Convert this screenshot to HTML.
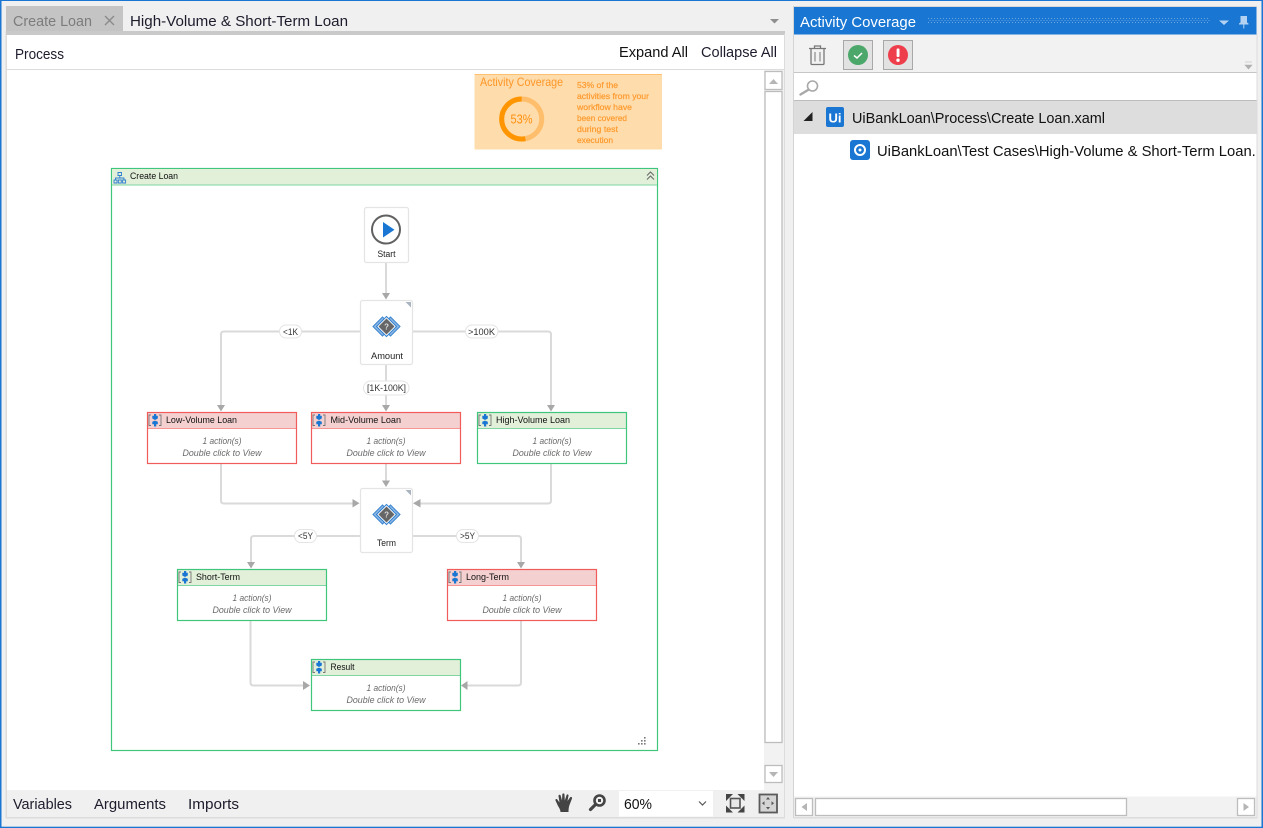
<!DOCTYPE html>
<html><head><meta charset="utf-8"><title>Activity Coverage</title>
<style>
html,body{margin:0;padding:0;background:#f0f0f0;overflow:hidden}
svg{display:block;font-family:"Liberation Sans",sans-serif}
.t{font-size:15px;fill:#1c1c2c}
.n{font-size:9px;fill:#111}
.i{font-size:9px;fill:#6a6a6a;font-style:italic;text-anchor:middle}
.w{fill:none;stroke:#dadada;stroke-width:2}
.a{fill:#a8a8a8}
.d{font-size:8.5px;fill:#ff9a2e;stroke:#ff9a2e;stroke-width:.2}
.l{font-size:9px;fill:#333;text-anchor:middle}
</style></head><body>
<svg width="1263" height="828" viewBox="0 0 1263 828" xmlns="http://www.w3.org/2000/svg">
<defs>
<clipPath id="rc"><rect x="794" y="134" width="462" height="40"/></clipPath>
<g id="seq">
<path d="M4 3H2V13.500H4M12 3H14V13.500H12" fill="none" stroke="#777" stroke-width=".9"/>
<path d="M5.300 3.700H7V2H9.200V3.700H10.800V6.500L8 8L5.300 6.500Z" fill="#1976d2"/>
<path d="M5.300 12.300H7V14.500H9.200V12.300H10.800V9.800L8 8.600L5.300 9.800Z" fill="#1976d2"/>
</g>
<g id="dec">
<path d="M-9.500 0L0 -9.500L9.500 0L0 9.500Z" fill="#8cb8e4" stroke="#3a85d0" stroke-width="1" transform="translate(-4 0)"/>
<path d="M-9.500 0L0 -9.500L9.500 0L0 9.500Z" fill="#8cb8e4" stroke="#3a85d0" stroke-width="1" transform="translate(4 0)"/>
<path d="M-10 0L0 -10L10 0L0 10Z" fill="#fff" stroke="#2f7fd0" stroke-width="1"/>
<path d="M-8 0L0 -8L8 0L0 8Z" fill="#666"/>
<text x="0" y="3" font-size="8" font-weight="bold" fill="#ddd" text-anchor="middle">?</text>
</g>
</defs>

<!-- window -->
<rect width="1263" height="828" fill="#f0f0f0"/>
<rect x="0" y="0" width="1263" height="1" fill="#1a76d2"/>
<rect x="0" y="0" width="1.500" height="828" fill="#1a76d2"/>
<rect x="1261.500" y="0" width="1.500" height="828" fill="#1a76d2"/>
<rect x="0" y="826.700" width="1263" height="1.300" fill="#1a76d2"/>

<!-- left doc -->
<rect x="5.500" y="31" width="1.500" height="787" fill="#dcdcdc"/>
<rect x="6" y="6" width="117" height="25" fill="#c4c4c4"/>
<rect x="6" y="31" width="779" height="4" fill="#c9c9c9"/>
<rect x="7" y="35" width="778" height="755" fill="#fff"/>
<text x="13" y="26" class="t" style="fill:#7c7c7c" textLength="79" lengthAdjust="spacingAndGlyphs">Create Loan</text>
<path d="M105 16L114 25M114 16L105 25" stroke="#8a8a8a" stroke-width="1.400" fill="none"/>
<text x="130" y="26" class="t" textLength="218" lengthAdjust="spacingAndGlyphs">High-Volume &amp; Short-Term Loan</text>
<path d="M770 19H779L774.500 23.500Z" fill="#8e8e8e"/>
<text x="15" y="59" class="t" textLength="49" lengthAdjust="spacingAndGlyphs">Process</text>
<text x="619" y="57" class="t" style="fill:#111" textLength="69" lengthAdjust="spacingAndGlyphs">Expand All</text>
<text x="701" y="57" class="t" textLength="76" lengthAdjust="spacingAndGlyphs">Collapse All</text>
<rect x="7" y="69" width="778" height="1" fill="#dcdcdc"/>

<!-- scrollbar -->
<rect x="764" y="70" width="20" height="720" fill="#f2f2f2"/>
<rect x="765" y="71.500" width="17" height="18" fill="#fff" stroke="#bdbdbd" stroke-width="1.300"/>
<path d="M769 84L773.500 79L778 84Z" fill="#b5b5b5"/>
<rect x="765" y="91.500" width="17" height="651" fill="#fff" stroke="#bdbdbd" stroke-width="1.300"/>
<rect x="765" y="765.500" width="17" height="17" fill="#fff" stroke="#bdbdbd" stroke-width="1.300"/>
<path d="M769 772H778L773.500 777Z" fill="#b5b5b5"/>

<!-- coverage box -->
<rect x="474.500" y="74.500" width="187.500" height="75" fill="#fedcab"/>
<rect x="474.500" y="74" width="187.500" height="1" fill="#ffc070"/>
<text x="480" y="86" font-size="12" fill="#ff9626" textLength="83" lengthAdjust="spacingAndGlyphs">Activity Coverage</text>
<circle cx="521.700" cy="119" r="20" fill="none" stroke="#ffbe6c" stroke-width="5"/>
<path d="M521.700 99A20 20 0 1 0 525.400 138.650" fill="none" stroke="#ff9500" stroke-width="5"/>
<text x="521.500" y="123.500" font-size="13" fill="#ff9010" text-anchor="middle" textLength="22" lengthAdjust="spacingAndGlyphs">53%</text>
<text x="577" y="88" class="d" textLength="41" lengthAdjust="spacingAndGlyphs">53% of the</text>
<text x="577" y="99" class="d" textLength="72" lengthAdjust="spacingAndGlyphs">activities from your</text>
<text x="577" y="110" class="d" textLength="55" lengthAdjust="spacingAndGlyphs">workflow have</text>
<text x="577" y="121" class="d" textLength="50" lengthAdjust="spacingAndGlyphs">been covered</text>
<text x="577" y="132" class="d" textLength="41" lengthAdjust="spacingAndGlyphs">during test</text>
<text x="577" y="143" class="d" textLength="36" lengthAdjust="spacingAndGlyphs">execution</text>

<!-- container -->
<rect x="111.500" y="168.500" width="546" height="582" fill="#fff" stroke="#3fc57c" stroke-width="1.200"/>
<rect x="112" y="169" width="545" height="15.500" fill="#e2efd9"/>
<rect x="112" y="184.500" width="545" height="1" fill="#7fd6a2"/>
<path d="M118 172.500h3.500v3H118zM114 180h3v3h-3zM118.300 180h3v3h-3zM122.600 180h3v3h-3zM119.800 175.500v2.500M115.500 180v-2h8.500v2" fill="none" stroke="#2f7fd0" stroke-width=".9"/>
<text x="130" y="179" class="n" textLength="48" lengthAdjust="spacingAndGlyphs">Create Loan</text>
<path d="M647 175.500L650.500 172L654 175.500M647 179.500L650.500 176L654 179.500" fill="none" stroke="#666" stroke-width="1"/>
<g fill="#777"><rect x="644" y="737" width="1.600" height="1.600"/><rect x="641" y="740" width="1.600" height="1.600"/><rect x="644" y="740" width="1.600" height="1.600"/><rect x="638" y="743" width="1.600" height="1.600"/><rect x="641" y="743" width="1.600" height="1.600"/><rect x="644" y="743" width="1.600" height="1.600"/></g>

<!-- wires -->
<path class="w" d="M386 262V294"/>
<path class="w" d="M360 331.500H224Q221 331.500 221 334.500V406"/>
<path class="w" d="M413 331.500H548Q551 331.500 551 334.500V406"/>
<path class="w" d="M386 364V406"/>
<path class="w" d="M221 464V500.500Q221 503.500 224 503.500H354"/>
<path class="w" d="M386 464V482"/>
<path class="w" d="M551 464V500.500Q551 503.500 548 503.500H420"/>
<path class="w" d="M360 536H254Q251 536 251 539V563"/>
<path class="w" d="M413 536H518Q521 536 521 539V563"/>
<path class="w" d="M250.500 621V682.500Q250.500 685.500 253.500 685.500H303"/>
<path class="w" d="M521 621V682.500Q521 685.500 518 685.500H467"/>
<!-- arrows -->
<path class="a" d="M382 293H390L386 299.500Z"/>
<path class="a" d="M217 405H225L221 411.500Z"/>
<path class="a" d="M382 405H390L386 411.500Z"/>
<path class="a" d="M547 405H555L551 411.500Z"/>
<path class="a" d="M382 480.500H390L386 487Z"/>
<path class="a" d="M352.500 499V507.500L359.500 503.300Z"/>
<path class="a" d="M420.500 499V507.500L413 503.300Z"/>
<path class="a" d="M247 562H255L251 568.500Z"/>
<path class="a" d="M517 562H525L521 568.500Z"/>
<path class="a" d="M303 681V690L310 685.500Z"/>
<path class="a" d="M467.500 681V690L461 685.500Z"/>

<!-- start -->
<rect x="364.500" y="207.500" width="44" height="55" rx="2" fill="#fff" stroke="#e4e4e4" stroke-width="1.200"/>
<circle cx="386" cy="229.500" r="14" fill="#fff" stroke="#606060" stroke-width="2"/>
<path d="M383 222V237.500L394.500 229.700Z" fill="#1976d2"/>
<text x="386.500" y="257" class="l" style="fill:#222" textLength="18" lengthAdjust="spacingAndGlyphs">Start</text>

<!-- amount -->
<rect x="360.500" y="300.500" width="52" height="64" rx="2" fill="#fff" stroke="#e4e4e4" stroke-width="1.200"/>
<path d="M405.500 302H411V307.500Z" fill="#a9b4c0"/>
<use href="#dec" x="386.500" y="326.500"/>
<text x="387" y="359" class="l" style="fill:#222" textLength="32" lengthAdjust="spacingAndGlyphs">Amount</text>

<!-- term -->
<rect x="360.500" y="488.500" width="52" height="64" rx="2" fill="#fff" stroke="#e4e4e4" stroke-width="1.200"/>
<path d="M405.500 490H411V495.500Z" fill="#a9b4c0"/>
<use href="#dec" x="386.500" y="514.500"/>
<text x="386.500" y="546" class="l" style="fill:#222" textLength="19" lengthAdjust="spacingAndGlyphs">Term</text>

<!-- pills -->
<g fill="#fff" stroke="#e4e4e4">
<rect x="279.500" y="325" width="22" height="13" rx="6.500"/>
<rect x="465.500" y="325" width="32.500" height="13" rx="6.500"/>
<rect x="363.500" y="381" width="45.500" height="14" rx="7"/>
<rect x="294.500" y="529.500" width="22" height="13" rx="6.500"/>
<rect x="456.500" y="529.500" width="22" height="13" rx="6.500"/>
</g>
<text x="290.500" y="335" class="l" textLength="15" lengthAdjust="spacingAndGlyphs">&lt;1K</text>
<text x="481.500" y="335" class="l" textLength="27" lengthAdjust="spacingAndGlyphs">&gt;100K</text>
<text x="386.500" y="391" class="l" textLength="39" lengthAdjust="spacingAndGlyphs">[1K-100K]</text>
<text x="305.500" y="539" class="l" textLength="15" lengthAdjust="spacingAndGlyphs">&lt;5Y</text>
<text x="467.500" y="539" class="l" textLength="15" lengthAdjust="spacingAndGlyphs">&gt;5Y</text>

<!-- Low -->
<g transform="translate(147 412)">
<rect x=".5" y=".5" width="149" height="51" fill="#fff"/><rect x="1" y="1" width="148" height="15" fill="#f4d0d0"/><rect x="1" y="16" width="148" height="1" fill="#f79494"/><rect x=".5" y=".5" width="149" height="51" fill="none" stroke="#f05c5c" stroke-width="1.200"/>
<use href="#seq" x="0" y="0"/>
<text x="19" y="11" class="n" textLength="71" lengthAdjust="spacingAndGlyphs">Low-Volume Loan</text>
<text x="75" y="32" class="i" textLength="39" lengthAdjust="spacingAndGlyphs">1 action(s)</text>
<text x="75" y="44" class="i" textLength="79" lengthAdjust="spacingAndGlyphs">Double click to View</text>
</g>
<!-- Mid -->
<g transform="translate(311 412)">
<rect x=".5" y=".5" width="149" height="51" fill="#fff"/><rect x="1" y="1" width="148" height="15" fill="#f4d0d0"/><rect x="1" y="16" width="148" height="1" fill="#f79494"/><rect x=".5" y=".5" width="149" height="51" fill="none" stroke="#f05c5c" stroke-width="1.200"/>
<use href="#seq" x="0" y="0"/>
<text x="19.500" y="11" class="n" textLength="70.500" lengthAdjust="spacingAndGlyphs">Mid-Volume Loan</text>
<text x="75" y="32" class="i" textLength="39" lengthAdjust="spacingAndGlyphs">1 action(s)</text>
<text x="75" y="44" class="i" textLength="79" lengthAdjust="spacingAndGlyphs">Double click to View</text>
</g>
<!-- High -->
<g transform="translate(477 412)">
<rect x=".5" y=".5" width="149" height="51" fill="#fff"/><rect x="1" y="1" width="148" height="15" fill="#e2efd9"/><rect x="1" y="16" width="148" height="1" fill="#7fd6a2"/><rect x=".5" y=".5" width="149" height="51" fill="none" stroke="#3fc57c" stroke-width="1.200"/>
<use href="#seq" x="0" y="0"/>
<text x="19" y="11" class="n" textLength="74" lengthAdjust="spacingAndGlyphs">High-Volume Loan</text>
<text x="75" y="32" class="i" textLength="39" lengthAdjust="spacingAndGlyphs">1 action(s)</text>
<text x="75" y="44" class="i" textLength="79" lengthAdjust="spacingAndGlyphs">Double click to View</text>
</g>
<!-- Short -->
<g transform="translate(177 569)">
<rect x=".5" y=".5" width="149" height="51" fill="#fff"/><rect x="1" y="1" width="148" height="15" fill="#e2efd9"/><rect x="1" y="16" width="148" height="1" fill="#7fd6a2"/><rect x=".5" y=".5" width="149" height="51" fill="none" stroke="#3fc57c" stroke-width="1.200"/>
<use href="#seq" x="0" y="0"/>
<text x="19" y="11" class="n" textLength="44" lengthAdjust="spacingAndGlyphs">Short-Term</text>
<text x="75" y="32" class="i" textLength="39" lengthAdjust="spacingAndGlyphs">1 action(s)</text>
<text x="75" y="44" class="i" textLength="79" lengthAdjust="spacingAndGlyphs">Double click to View</text>
</g>
<!-- Long -->
<g transform="translate(447 569)">
<rect x=".5" y=".5" width="149" height="51" fill="#fff"/><rect x="1" y="1" width="148" height="15" fill="#f4d0d0"/><rect x="1" y="16" width="148" height="1" fill="#f79494"/><rect x=".5" y=".5" width="149" height="51" fill="none" stroke="#f05c5c" stroke-width="1.200"/>
<use href="#seq" x="0" y="0"/>
<text x="19" y="11" class="n" textLength="43" lengthAdjust="spacingAndGlyphs">Long-Term</text>
<text x="75" y="32" class="i" textLength="39" lengthAdjust="spacingAndGlyphs">1 action(s)</text>
<text x="75" y="44" class="i" textLength="79" lengthAdjust="spacingAndGlyphs">Double click to View</text>
</g>
<!-- Result -->
<g transform="translate(311 659)">
<rect x=".5" y=".5" width="149" height="51" fill="#fff"/><rect x="1" y="1" width="148" height="15" fill="#e2efd9"/><rect x="1" y="16" width="148" height="1" fill="#7fd6a2"/><rect x=".5" y=".5" width="149" height="51" fill="none" stroke="#3fc57c" stroke-width="1.200"/>
<use href="#seq" x="0" y="0"/>
<text x="19.500" y="11" class="n" textLength="24" lengthAdjust="spacingAndGlyphs">Result</text>
<text x="75" y="32" class="i" textLength="39" lengthAdjust="spacingAndGlyphs">1 action(s)</text>
<text x="75" y="44" class="i" textLength="79" lengthAdjust="spacingAndGlyphs">Double click to View</text>
</g>

<!-- bottom bar -->
<rect x="7" y="790" width="778" height="27" fill="#f0f0f0"/>
<rect x="6" y="817" width="779" height="1.500" fill="#dcdcdc"/>
<rect x="784" y="34" width="1" height="784" fill="#dcdcdc"/>
<text x="13" y="809" class="t" textLength="59" lengthAdjust="spacingAndGlyphs">Variables</text>
<text x="94" y="809" class="t" textLength="72" lengthAdjust="spacingAndGlyphs">Arguments</text>
<text x="188" y="809" class="t" textLength="51" lengthAdjust="spacingAndGlyphs">Imports</text>
<path d="M558 806L555.500 800.500C555 799 556.800 798.500 557.500 799.700L559.500 802.500L558.500 796C558.300 794.500 560.300 794.200 560.700 795.700L562 800.500L562.300 794.500C562.400 793 564.400 793 564.500 794.500L564.800 800.500L566.500 795.200C567 793.800 568.800 794.300 568.500 795.800L567.500 801L570 797.500C570.800 796.300 572.500 797 572 798.500L569.500 805C568.800 807 568.500 809 568.500 812H560.500C560.300 809.500 559.300 808 558 806Z" fill="#444"/>
<circle cx="599.500" cy="800.500" r="5" fill="none" stroke="#444" stroke-width="2.600"/>
<path d="M595.500 804.500L590.500 809.500" stroke="#444" stroke-width="3.200" stroke-linecap="round"/>
<rect x="598" y="799" width="3" height="3" fill="#444"/>
<rect x="619" y="791" width="94" height="25.500" fill="#fff"/>
<text x="624" y="809" class="t" style="fill:#111" textLength="28" lengthAdjust="spacingAndGlyphs">60%</text>
<path d="M699 801.500L702.500 805L706 801.500" fill="none" stroke="#555" stroke-width="1.200"/>
<!-- fit icon -->
<g fill="#444">
<rect x="730.500" y="798.500" width="9.500" height="9.500" fill="#e8e8e8" stroke="#555" stroke-width="1.600"/>
<path d="M726 794H733L726 801ZM744.500 794H737.500L744.500 801ZM726 812.500H733L726 805.500ZM744.500 812.500H737.500L744.500 805.500Z"/>
</g>
<!-- actual size icon -->
<rect x="759.500" y="794.500" width="17.500" height="18" fill="#d4d4d4" stroke="#5a5a5a" stroke-width="1.800"/>
<g fill="#555">
<path d="M768 797L770 799.500H766ZM768 809.500L770 807H766ZM762 803.200L764.500 801.200V805.200ZM774 803.200L771.500 801.200V805.200Z"/>
</g>

<!-- right panel -->
<rect x="793" y="6" width="1" height="812" fill="#d4d4d4"/>
<rect x="794" y="6" width="463" height="1" fill="#d8d8d8"/>
<rect x="794" y="7" width="462.500" height="27.500" fill="#1976d2"/>
<text x="800" y="27" font-size="15" fill="#fff" textLength="116" lengthAdjust="spacingAndGlyphs">Activity Coverage</text>
<path d="M928 18.500H1209.500M928 22.500H1209.500" stroke="#a5c8ee" stroke-width="1" stroke-dasharray="1 2" opacity=".6"/>
<path d="M928 20.500H1209.500" stroke="#a5c8ee" stroke-width="1" stroke-dasharray="1 2" stroke-dashoffset="1.500" opacity=".6"/>
<path d="M1219 20.500H1229L1224 25Z" fill="#b4d3f2"/>
<path d="M1240.500 16H1247V22.500L1248.500 23.500V24.500H1239V23.500L1240.500 22.500ZM1243.300 24.500H1244.300V28.500H1243.300Z" fill="#b4d3f2"/>
<rect x="794" y="34.500" width="462.500" height="37.500" fill="#f2f2f2"/>
<!-- trash -->
<g fill="none" stroke="#777" stroke-width="1.300">
<path d="M809 48.500H826M814.500 48V46H820.500V48"/>
<path d="M811 49V63.500C811 64.200 811.500 64.500 812 64.500H823C823.500 64.500 824 64.200 824 63.500V49"/>
<path d="M815 52V61.500M820 52V61.500" stroke-width="1"/>
</g>
<rect x="843.500" y="40.500" width="29" height="29" fill="#e2e2e2" stroke="#a8a8a8" stroke-width="1"/>
<circle cx="858" cy="55" r="10" fill="#4ca76a"/>
<path d="M854 55.500L857 58L862 53" fill="none" stroke="#fff" stroke-width="1.500"/>
<rect x="883.500" y="40.500" width="29" height="29" fill="#e2e2e2" stroke="#a8a8a8" stroke-width="1"/>
<circle cx="898" cy="55" r="10" fill="#ee3e4c"/>
<rect x="896.600" y="48.500" width="2.900" height="8.500" rx="1" fill="#fff"/>
<circle cx="898" cy="60.200" r="1.700" fill="#fff"/>
<path d="M1245 62H1252M1245 65H1252L1248.500 69Z" fill="#b0b0b0" stroke="#b0b0b0" stroke-width=".6"/>
<rect x="794" y="72" width="462.500" height="1.200" fill="#c6c6c6"/>
<rect x="794" y="73" width="462.500" height="27" fill="#fff"/>
<circle cx="812.500" cy="86" r="5" fill="none" stroke="#a8a8a8" stroke-width="1.600"/>
<path d="M808 90L800.500 94.500" stroke="#a8a8a8" stroke-width="2.400" stroke-linecap="round"/>
<rect x="794" y="100" width="462.500" height="1.200" fill="#bdbdbd"/>
<rect x="794" y="101" width="462.500" height="33" fill="#dddddd"/>
<rect x="794" y="134" width="462.500" height="663" fill="#fff"/>
<path d="M812.500 112V121H803.500Z" fill="#222"/>
<rect x="826" y="107" width="18" height="20" rx="2" fill="#1976d2"/>
<text x="835" y="122.500" font-size="13" font-weight="bold" fill="#fff" text-anchor="middle">Ui</text>
<text x="852" y="123" class="t" style="fill:#111" textLength="253" lengthAdjust="spacingAndGlyphs">UiBankLoan\Process\Create Loan.xaml</text>
<rect x="850" y="140" width="20" height="20" rx="3" fill="#1976d2"/>
<circle cx="860" cy="150" r="5" fill="none" stroke="#fff" stroke-width="2"/>
<circle cx="860" cy="150" r="1.500" fill="#fff"/>
<g clip-path="url(#rc)"><text x="877" y="156" class="t" style="fill:#111" textLength="410" lengthAdjust="spacingAndGlyphs">UiBankLoan\Test Cases\High-Volume &amp; Short-Term Loan.xaml</text></g>
<rect x="1256.500" y="34" width="1" height="784" fill="#dcdcdc"/>
<!-- h-scroll -->
<rect x="794" y="796.500" width="462.500" height="21" fill="#f2f2f2"/>
<rect x="794" y="817" width="463" height="1.500" fill="#dcdcdc"/>
<rect x="795.500" y="798.500" width="17" height="17" fill="#fff" stroke="#bdbdbd" stroke-width="1.300"/>
<path d="M807 803V811L801.500 807Z" fill="#b5b5b5"/>
<rect x="815.500" y="798.500" width="311" height="17" fill="#fff" stroke="#bdbdbd" stroke-width="1.300"/>
<rect x="1237.500" y="798.500" width="17" height="17" fill="#fff" stroke="#bdbdbd" stroke-width="1.300"/>
<path d="M1243.500 803V811L1249 807Z" fill="#b5b5b5"/>
</svg>
</body></html>
